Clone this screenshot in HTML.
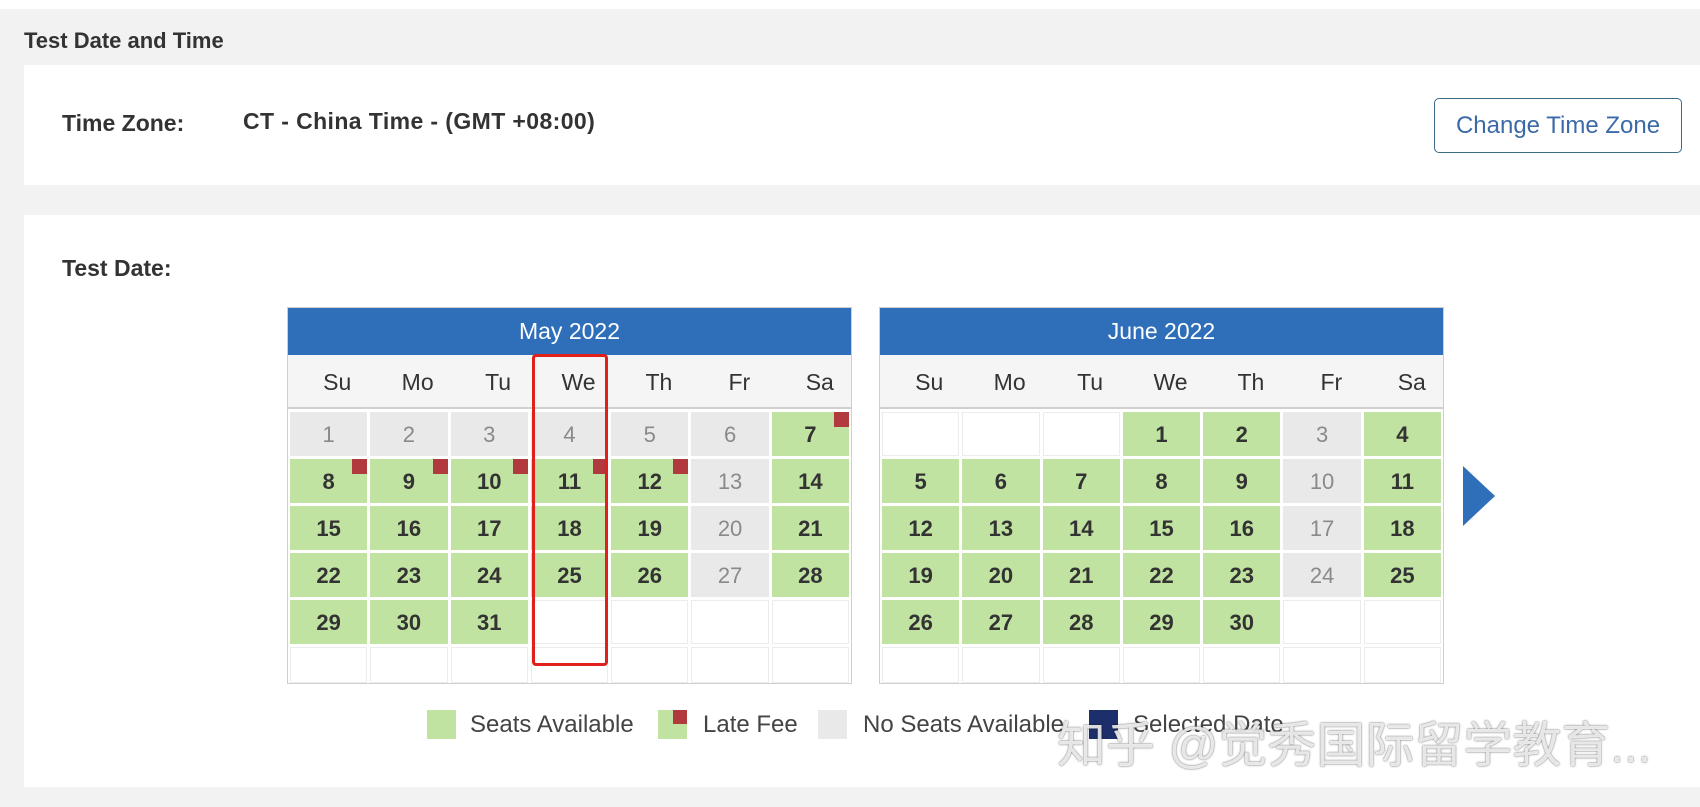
<!DOCTYPE html>
<html><head><meta charset="utf-8"><style>
*{box-sizing:border-box;margin:0;padding:0}
body{width:1700px;height:807px;background:#f2f2f2;font-family:"Liberation Sans","Noto Sans CJK SC",sans-serif;position:relative;overflow:hidden;color:#333}
.topw{position:absolute;left:0;top:0;width:1700px;height:9px;background:#fff}
.panel{position:absolute;left:24px;right:0;background:#fff}
.abs{position:absolute;white-space:nowrap}
.b{font-weight:bold}
.btn{position:absolute;left:1434px;top:98px;width:248px;height:55px;border:1px solid #3d6a87;border-radius:5px;color:#3c6aa8;font-size:24px;text-align:center;line-height:53px}
.cal{position:absolute;top:307px;width:565px;height:377px;border:1px solid #cfcfcf;background:#fff}
.hd{height:47px;background:#2f6fba;color:#fff;font-size:23px;text-align:center;line-height:47px}
.dn{height:54px;background:#f5f5f5;border-bottom:2px solid #d0d0d0;display:grid;grid-template-columns:repeat(7,1fr);font-size:23px;line-height:54px;text-align:center}
.dn span{padding-left:18px}
.g{display:grid;grid-template-columns:repeat(7,1fr);grid-auto-rows:44px;gap:3px;padding:3px 2px 0 2px}
.c{position:relative;text-align:center;font-size:22px;line-height:46px;font-weight:bold;color:#333}
.gr{background:#c1e3a1}
.na{background:#e9e9e9;color:#8a8a8a;font-weight:normal}
.w{background:#fff;border:1px solid #ececec}
.l::after{content:"";position:absolute;right:0;top:0;width:15px;height:15px;background:#b13a3e}
.last{height:36px}
.lg{position:absolute;top:710px;width:29px;height:29px}
.lt{position:absolute;top:710px;font-size:24px;color:#444;line-height:30px}
</style></head><body>
<div class="topw"></div>
<div class="abs b" style="left:24px;top:28px;font-size:22px;color:#333">Test Date and Time</div>
<div class="panel" style="top:65px;height:120px"></div>
<div class="abs b" style="left:62px;top:110px;font-size:23px">Time Zone:</div>
<div class="abs b" style="left:243px;top:108px;font-size:23px;letter-spacing:0.4px">CT - China Time - (GMT +08:00)</div>
<div class="btn">Change Time Zone</div>
<div class="panel" style="top:215px;height:572px"></div>
<div class="abs b" style="left:62px;top:255px;font-size:23px">Test Date:</div>

<div class="cal" style="left:287px">
<div class="hd">May 2022</div>
<div class="dn"><span>Su</span><span>Mo</span><span>Tu</span><span>We</span><span>Th</span><span>Fr</span><span>Sa</span></div>
<div class="g">
<div class="c na">1</div><div class="c na">2</div><div class="c na">3</div><div class="c na">4</div><div class="c na">5</div><div class="c na">6</div><div class="c gr l">7</div>
<div class="c gr l">8</div><div class="c gr l">9</div><div class="c gr l">10</div><div class="c gr l">11</div><div class="c gr l">12</div><div class="c na">13</div><div class="c gr">14</div>
<div class="c gr">15</div><div class="c gr">16</div><div class="c gr">17</div><div class="c gr">18</div><div class="c gr">19</div><div class="c na">20</div><div class="c gr">21</div>
<div class="c gr">22</div><div class="c gr">23</div><div class="c gr">24</div><div class="c gr">25</div><div class="c gr">26</div><div class="c na">27</div><div class="c gr">28</div>
<div class="c gr">29</div><div class="c gr">30</div><div class="c gr">31</div><div class="c w"></div><div class="c w"></div><div class="c w"></div><div class="c w"></div>
<div class="c w last"></div><div class="c w last"></div><div class="c w last"></div><div class="c w last"></div><div class="c w last"></div><div class="c w last"></div><div class="c w last"></div>
</div></div>

<div class="cal" style="left:879px">
<div class="hd">June 2022</div>
<div class="dn"><span>Su</span><span>Mo</span><span>Tu</span><span>We</span><span>Th</span><span>Fr</span><span>Sa</span></div>
<div class="g">
<div class="c w"></div><div class="c w"></div><div class="c w"></div><div class="c gr">1</div><div class="c gr">2</div><div class="c na">3</div><div class="c gr">4</div>
<div class="c gr">5</div><div class="c gr">6</div><div class="c gr">7</div><div class="c gr">8</div><div class="c gr">9</div><div class="c na">10</div><div class="c gr">11</div>
<div class="c gr">12</div><div class="c gr">13</div><div class="c gr">14</div><div class="c gr">15</div><div class="c gr">16</div><div class="c na">17</div><div class="c gr">18</div>
<div class="c gr">19</div><div class="c gr">20</div><div class="c gr">21</div><div class="c gr">22</div><div class="c gr">23</div><div class="c na">24</div><div class="c gr">25</div>
<div class="c gr">26</div><div class="c gr">27</div><div class="c gr">28</div><div class="c gr">29</div><div class="c gr">30</div><div class="c w"></div><div class="c w"></div>
<div class="c w last"></div><div class="c w last"></div><div class="c w last"></div><div class="c w last"></div><div class="c w last"></div><div class="c w last"></div><div class="c w last"></div>
</div></div>

<div style="position:absolute;left:532px;top:354px;width:76px;height:312px;border:3px solid #e0201b;border-radius:4px"></div>

<svg style="position:absolute;left:1463px;top:466px" width="32" height="60"><polygon points="0,0 32,30 0,60" fill="#2f6fba"/></svg>

<div class="lg" style="left:427px;background:#c1e3a1"></div>
<div class="lt" style="left:470px">Seats Available</div>
<div class="lg" style="left:658px;background:#c1e3a1"><div style="position:absolute;right:0;top:0;width:14px;height:14px;background:#b13a3e"></div></div>
<div class="lt" style="left:703px">Late Fee</div>
<div class="lg" style="left:818px;background:#e9e9e9"></div>
<div class="lt" style="left:863px">No Seats Available</div>
<div class="lg" style="left:1089px;background:#1c2f6b"></div>
<div class="lt" style="left:1133px">Selected Date</div>
<div class="abs" style="left:1057px;top:706px;font-size:49px;color:rgba(255,255,255,0.85);text-shadow:0 0 2px rgba(0,0,0,0.45),0 0 1px rgba(0,0,0,0.4)">知乎 @觉秀国际留学教育...</div>
</body></html>
